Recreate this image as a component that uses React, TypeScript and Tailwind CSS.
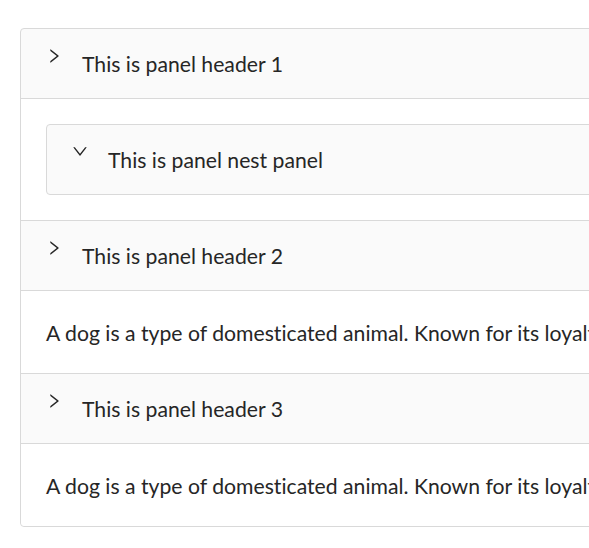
import React from "react";

const ArrowIcon = ({ down = false }: { down?: boolean }) => (
  <svg
    viewBox="0 0 1024 1024"
    width="18"
    height="18"
    fill="currentColor"
    className={down ? "rotate-90" : ""}
    aria-hidden="true"
  >
    <path d="M765.7 486.8L314.9 134.7A7.97 7.97 0 00302 141v77.3c0 4.9 2.3 9.6 6.1 12.6l360 281.1-360 281.1c-3.9 3-6.1 7.7-6.1 12.6V883c0 6.7 7.7 10.4 12.9 6.3l450.8-352.1a31.96 31.96 0 000-50.4z" />
  </svg>
);

const Header = ({ title, down = false, nested = false }: { title: string; down?: boolean; nested?: boolean }) => (
  <div className="relative pl-[61px] pt-[19px] pb-[17px] leading-[33px] text-[#262626] cursor-pointer">
    <span className={`absolute left-[24px] ${nested ? "top-[17px]" : "top-[18px]"} flex text-[#262626]`}>
      <ArrowIcon down={down} />
    </span>
    {title}
  </div>
);

const dogText = "A dog is a type of domesticated animal. Known for its loyalty and faithfulness, it can be found as a welcome guest in many households across the world.";

export default function App() {
  return (
    <div
      className="w-[589px] h-[548px] overflow-hidden bg-white pt-[28px] pl-[20px] whitespace-nowrap [font-variant-ligatures:none]"
      style={{ fontFamily: "'Lato', sans-serif", fontSize: 21.2 }}
    >
      <div className="w-[1000px] border border-[#d9d9d9] rounded-[4px] bg-[#fafafa]">
        {/* Panel 1 */}
        <div className="border-b border-[#d9d9d9]">
          <Header title="This is panel header 1" />
          <div className="border-t border-[#d9d9d9] bg-white p-[25px]">
            <div className="w-[1000px] border border-[#d9d9d9] rounded-[4px] bg-[#fafafa]">
              <Header title="This is panel nest panel" down nested />
            </div>
          </div>
        </div>
        {/* Panel 2 */}
        <div className="border-b border-[#d9d9d9]">
          <Header title="This is panel header 2" />
          <div className="border-t border-[#d9d9d9] bg-white px-[25px] pt-[25px] pb-[23px] leading-[34px] text-[#262626]">
            {dogText}
          </div>
        </div>
        {/* Panel 3 */}
        <div>
          <Header title="This is panel header 3" />
          <div className="border-t border-[#d9d9d9] bg-white px-[25px] pt-[25px] pb-[23px] leading-[34px] text-[#262626] rounded-b-[4px]">
            {dogText}
          </div>
        </div>
      </div>
    </div>
  );
}
